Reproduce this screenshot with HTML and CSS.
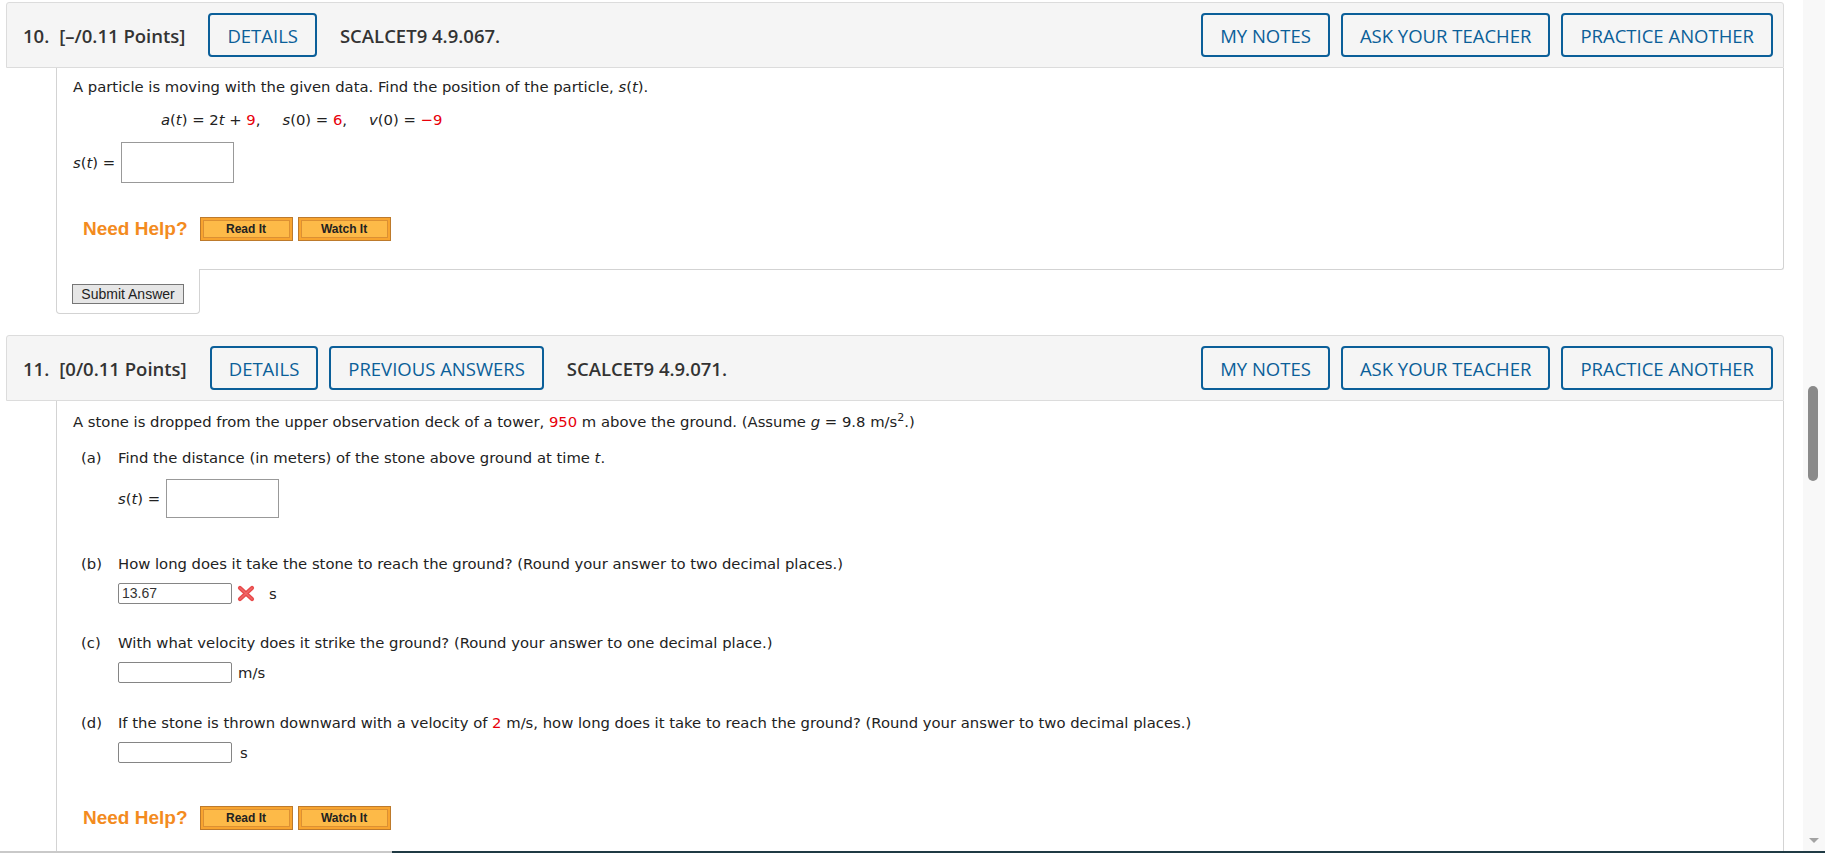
FILE: index.html
```html
<!DOCTYPE html>
<html lang="en">
<head>
    <meta charset="UTF-8">
    <title>WebAssign - 4.9 Antiderivatives</title>
    <link rel="stylesheet" href="styles.css">
</head>
<body>
    <div class="page">
        <!-- Question 10 -->
        <section class="question">
            <div class="q-head">
                <span class="q-num">10.</span>
                <span class="q-points">[–/0.11 Points]</span>
                <a class="q-btn">DETAILS</a>
                <span class="q-code">SCALCET9 4.9.067.</span>
                <div class="q-tools">
                    <a class="q-btn">MY NOTES</a>
                    <a class="q-btn">ASK YOUR TEACHER</a>
                    <a class="q-btn">PRACTICE ANOTHER</a>
                </div>
            </div>
            <div class="q-body q10">
                <p class="prompt">A particle is moving with the given data. Find the position of the particle, <i>s</i>(<i>t</i>).</p>
                <p class="equation"><i>a</i>(<i>t</i>) = 2<i>t</i> + <span class="red">9</span>,<span class="sp"></span><i>s</i>(0) = <span class="red">6</span>,<span class="sp"></span><i>v</i>(0) = <span class="red">−9</span></p>
                <div class="answer-row">
                    <span class="lbl"><i>s</i>(<i>t</i>) =</span>
                    <span class="big-input"></span>
                </div>
                <div class="help">
                    <span class="help-title">Need Help?</span>
                    <a class="help-btn">Read It</a>
                    <a class="help-btn">Watch It</a>
                </div>
            </div>
            <div class="q-submit">
                <span class="submit-btn">Submit Answer</span>
            </div>
        </section>

        <!-- Question 11 -->
        <section class="question q11">
            <div class="q-head">
                <span class="q-num">11.</span>
                <span class="q-points">[0/0.11 Points]</span>
                <a class="q-btn">DETAILS</a>
                <a class="q-btn">PREVIOUS ANSWERS</a>
                <span class="q-code">SCALCET9 4.9.071.</span>
                <div class="q-tools">
                    <a class="q-btn">MY NOTES</a>
                    <a class="q-btn">ASK YOUR TEACHER</a>
                    <a class="q-btn">PRACTICE ANOTHER</a>
                </div>
            </div>
            <div class="q-body q11-body">
                <p class="prompt">A stone is dropped from the upper observation deck of a tower, <span class="red">950</span> m above the ground. (Assume <i>g</i> = 9.8 m/s<sup>2</sup>.)</p>

                <div class="part part-a">
                    <span class="part-lbl">(a)</span>
                    <div>
                        <p>Find the distance (in meters) of the stone above ground at time <i>t</i>.</p>
                        <div class="answer-row">
                            <span class="lbl"><i>s</i>(<i>t</i>) =</span>
                            <span class="big-input"></span>
                        </div>
                    </div>
                </div>

                <div class="part part-b">
                    <span class="part-lbl">(b)</span>
                    <div>
                        <p>How long does it take the stone to reach the ground? (Round your answer to two decimal places.)</p>
                        <div class="small-row">
                            <span class="small-input">13.67</span>
                            <svg class="wrong" width="18" height="17" viewBox="0 0 18 17">
                                <path d="M3 3 L15 14 M15 3 L3 14" stroke="#e8494a" stroke-width="4.2" stroke-linecap="round"/>
                                <path d="M3 3 L15 14 M15 3 L3 14" stroke="#f27474" stroke-width="1.4" stroke-linecap="round" opacity="0.7"/>
                            </svg>
                            <span class="unit unit-s">s</span>
                        </div>
                    </div>
                </div>

                <div class="part part-c">
                    <span class="part-lbl">(c)</span>
                    <div>
                        <p>With what velocity does it strike the ground? (Round your answer to one decimal place.)</p>
                        <div class="small-row">
                            <span class="small-input"></span>
                            <span class="unit">m/s</span>
                        </div>
                    </div>
                </div>

                <div class="part part-d">
                    <span class="part-lbl">(d)</span>
                    <div>
                        <p>If the stone is thrown downward with a velocity of <span class="red">2</span> m/s, how long does it take to reach the ground? (Round your answer to two decimal places.)</p>
                        <div class="small-row">
                            <span class="small-input"></span>
                            <span class="unit unit-d">s</span>
                        </div>
                    </div>
                </div>

                <div class="help help-11">
                    <span class="help-title">Need Help?</span>
                    <a class="help-btn">Read It</a>
                    <a class="help-btn">Watch It</a>
                </div>
            </div>
        </section>
    </div>

    <!-- barra de rolagem desenhada -->
    <div class="scrollbar">
        <div class="thumb"></div>
        <div class="arrow"></div>
    </div>
    <div class="bottom-bar"></div>
</body>
</html>
```

FILE: styles.css
```css
* {
    margin: 0;
    padding: 0;
    box-sizing: border-box;
}

html, body {
    height: 100%;
    overflow: hidden;
}

body {
    background: #fff;
    color: #222;
    font-family: "DejaVu Sans", Verdana, sans-serif;
    font-size: 14.8px;
}

.page {
    width: 1778px;
    margin: 2px 0 0 6px;
}

/* Cabeçalho da questão */
.q-head {
    height: 66px;
    display: flex;
    align-items: center;
    background: #f5f5f5;
    border: 1px solid #dcdcdc;
    border-radius: 3px 3px 0 0;
    padding: 0 10px 0 16px;
    font-family: "Open Sans", sans-serif;
    font-size: 18.5px;
    color: #333;
}

.q-num {
    font-weight: 600;
    margin-right: 10px;
}

.q-points {
    font-weight: 600;
    margin-right: 23px;
}

.q-code {
    font-weight: 600;
    margin-left: 12px;
}

.q-btn {
    display: flex;
    align-items: center;
    height: 44px;
    padding: 0 17px;
    border: 2px solid #0b5f99;
    border-radius: 4px;
    color: #0b5f99;
    background: #f5f5f5;
    margin-right: 11px;
    white-space: nowrap;
}

.q-tools {
    margin-left: auto;
    display: flex;
}

.q-tools .q-btn:last-child {
    margin-right: 0;
}

/* Corpo da questão */
.q-body {
    margin-left: 50px;
    border: 1px solid #d3d3d3;
    border-top: none;
    border-radius: 0 0 3px 0;
    padding: 9px 16px 0 16px;
    line-height: 20px;
}

.q10 {
    padding-bottom: 28px;
}

.prompt {
    margin: 0;
}

.equation {
    margin-top: 13px;
    padding-left: 88px;
}

.sp {
    display: inline-block;
    width: 22px;
}

.red {
    color: #e8000b;
}

sup {
    font-size: 11px;
    line-height: 0;
}

.answer-row {
    display: flex;
    align-items: center;
    margin-top: 12px;
}

.lbl {
    width: 48px;
}

.big-input {
    display: block;
    width: 113px;
    height: 41px;
    border: 1px solid #999;
    background: #fff;
}

/* Need Help */
.help {
    display: flex;
    align-items: center;
    margin-top: 34px;
    padding-left: 10px;
}

.help-title {
    font-family: "Liberation Sans", Arial, sans-serif;
    font-weight: bold;
    font-size: 19px;
    color: #f38b1e;
    margin-right: 12px;
}

.help-btn {
    display: flex;
    align-items: center;
    justify-content: center;
    width: 93px;
    height: 24px;
    margin-right: 5px;
    border: 1px solid #bd7a2c;
    background: #fdba48;
    box-shadow: inset 0 0 0 2px #f8a42f, inset 0 0 0 3px #dc9033;
    font-family: "Liberation Sans", Arial, sans-serif;
    font-weight: bold;
    font-size: 12px;
    color: #222;
}

/* Aba do Submit */
.q-submit {
    position: relative;
    margin: -1px 0 0 50px;
    width: 144px;
    height: 45px;
    background: #fff;
    border: 1px solid #d3d3d3;
    border-top: none;
    border-radius: 0 0 4px 4px;
    padding: 15px 0 0 15px;
}

.submit-btn {
    display: inline-block;
    width: 112px;
    height: 20px;
    line-height: 18px;
    border: 1px solid #767676;
    background: #e6e6e6;
    font-family: "Liberation Sans", Arial, sans-serif;
    font-size: 14px;
    color: #222;
    text-align: center;
}

/* Questão 11 */
.q11 {
    margin-top: 21px;
}

.q11-body {
    padding-top: 11px;
    padding-bottom: 40px;
}

.part {
    display: grid;
    grid-template-columns: 37px 1fr;
    padding-left: 8px;
}

.part-a { margin-top: 16px; }
.part-a .answer-row { margin-top: 11px; }
.part-a .big-input { height: 39px; }
.part-b { margin-top: 36px; }
.part-c { margin-top: 29px; }
.part-d { margin-top: 30px; }

.small-row {
    display: flex;
    align-items: center;
    margin-top: 9px;
}

.small-input {
    display: block;
    width: 114px;
    height: 21px;
    line-height: 19px;
    padding-left: 3px;
    border: 1px solid #858585;
    border-radius: 2px;
    font-family: "Liberation Sans", Arial, sans-serif;
    font-size: 14px;
    color: #333;
}

.wrong {
    margin-left: 5px;
}

.unit {
    margin-left: 6px;
}

.unit-s {
    margin-left: 14px;
}

.unit-d {
    margin-left: 8px;
}

.help-11 {
    margin-top: 43px;
}

/* Barra de rolagem e rodapé */
.scrollbar {
    position: fixed;
    top: 0;
    right: 0;
    width: 22px;
    height: 100%;
    background: #f8f8f8;
}

.thumb {
    position: absolute;
    top: 386px;
    left: 5px;
    width: 10px;
    height: 95px;
    border-radius: 5px;
    background: #8a8a8a;
}

.arrow {
    position: absolute;
    bottom: 10px;
    left: 6px;
    border-left: 5px solid transparent;
    border-right: 5px solid transparent;
    border-top: 5px solid #a3a3a3;
}

.bottom-bar {
    position: fixed;
    left: 0;
    bottom: 0;
    width: 100%;
    height: 2px;
    background: linear-gradient(90deg, #c9c9c9 0, #c9c9c9 392px, #1f3a44 392px);
}
```
